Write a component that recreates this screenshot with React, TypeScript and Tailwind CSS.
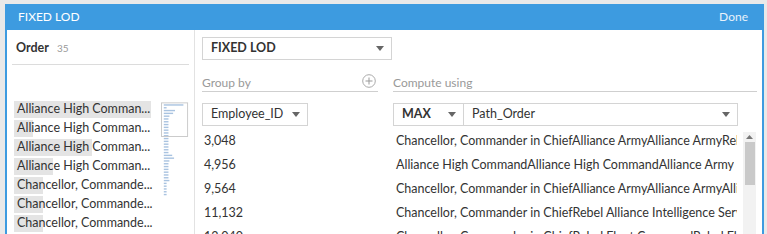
import React from "react";

const font = { fontFamily: "Lato, 'Open Sans', sans-serif" };

const listRows = [
  { label: "Alliance High Comman...", bar: 137 },
  { label: "Alliance High Comman...", bar: 19 },
  { label: "Alliance High Comman...", bar: 78 },
  { label: "Alliance High Comman...", bar: 39 },
  { label: "Chancellor, Commande...", bar: 29 },
  { label: "Chancellor, Commande...", bar: 29 },
  { label: "Chancellor, Commande...", bar: 29 },
];

const tableRows = [
  { id: "3,048", path: "Chancellor, Commander in ChiefAlliance ArmyAlliance ArmyRebel Alliance" },
  { id: "4,956", path: "Alliance High CommandAlliance High CommandAlliance Army" },
  { id: "9,564", path: "Chancellor, Commander in ChiefAlliance ArmyAlliance ArmyAlliance Army" },
  { id: "11,132", path: "Chancellor, Commander in ChiefRebel Alliance Intelligence Service" },
  { id: "12,040", path: "Chancellor, Commander in ChiefRebel Fleet CommandRebel Fleet" },
];

const overviewLines = [21, 3, 12, 10, 6, 5, 5, 5, 5, 5, 5, 5, 5, 5, 5, 5, 5, 5, 9, 11, 6, 5, 5, 5, 5, 5, 5, 6, 3, 3, 3, 3, 3];

const Caret = () => (
  <svg width="8" height="5" viewBox="0 0 8 5">
    <path d="M0 0 L8 0 L4 5 Z" fill="#666" />
  </svg>
);

const Dropdown = ({
  label,
  width,
  bold,
  className = "",
}: {
  label: string;
  width: string;
  bold?: boolean;
  className?: string;
}) => (
  <div
    className={`h-[23px] border border-[#d4d4d4] bg-white flex items-center justify-between pl-[8px] pr-[7px] text-[12.5px] text-[#333] ${bold ? "font-bold" : ""} ${width} ${className}`}
  >
    <span>{label}</span>
    <Caret />
  </div>
);

export default function App() {
  return (
    <div className="w-[767px] h-[234px] bg-[#e9e9e9] pt-[4px] pl-[5px] overflow-hidden" style={font}>
      <div className="w-[759px] h-[230px] bg-white flex flex-col">
        <div className="h-[26px] bg-[#3d9be0] flex items-center justify-between pl-[13px] pr-[16px] text-[12px] text-white shrink-0">
          <span>FIXED LOD</span>
          <span className="text-[#e8f2fb]">Done</span>
        </div>
        <div className="flex flex-1 border-x-2 border-[#3d9be0] min-h-0">
          {/* left field panel */}
          <div className="w-[188px] border-r border-[#e2e2e2] px-[5px] shrink-0">
            <div className="h-[35px] border-b border-[#dcdcdc] flex items-center pl-[4px] pt-[2px] gap-[8px]">
              <span className="text-[12.5px] font-bold text-[#333]">Order</span>
              <span className="text-[10px] text-[#999]">35</span>
            </div>
            <div className="flex mt-[35px] gap-[10px] pl-[2px]">
              <div className="w-[137px] flex flex-col">
                {listRows.map((r, i) => (
                  <div key={i} className="h-[19px] relative flex items-center">
                    <div className="absolute left-0 top-[1px] h-[17px] bg-[#e4e4e4]" style={{ width: r.bar }} />
                    <span className="relative pl-[3px] text-[12.5px] text-[#333] whitespace-nowrap">{r.label}</span>
                  </div>
                ))}
              </div>
              <svg width="30" height="102" viewBox="0 0 30 102" className="-mt-[1px]">
                {overviewLines.map((w, i) => (
                  <rect key={i} x="3" y={2 + i * 3} width={w} height="1.5" fill="#a9c3e0" />
                ))}
                <rect x="0.5" y="0.5" width="28" height="36" fill="none" stroke="#c8c8c8" />
              </svg>
            </div>
          </div>

          {/* right calc panel */}
          <div className="flex-1 pl-[7px] pr-[5px] pt-[7px] flex flex-col min-w-0">
            <Dropdown label="FIXED LOD" width="w-[190px]" bold />
            <div className="flex mt-[16px] gap-[15px]">
              <div className="w-[176px] h-[16px] border-b border-[#cfcfcf] flex items-center justify-between pb-[1px]">
                <span className="text-[12px] text-[#999]">Group by</span>
                <svg width="14" height="14" viewBox="0 0 14 14" className="mr-[2px] -mt-[4px]">
                  <circle cx="7" cy="7" r="6.3" fill="none" stroke="#aaa" strokeWidth="1" />
                  <path d="M7 3.5 V10.5 M3.5 7 H10.5" stroke="#999" strokeWidth="1" />
                </svg>
              </div>
              <div className="flex-1 h-[16px] border-b border-[#cfcfcf] flex items-center pb-[1px]">
                <span className="text-[12px] text-[#999]">Compute using</span>
              </div>
            </div>
            <div className="flex mt-[11px] gap-[85px]">
              <Dropdown label="Employee_ID" width="w-[106px]" />
              <div className="flex">
                <Dropdown label="MAX" width="w-[71px]" bold />
                <Dropdown label="Path_Order" width="w-[274px]" className="border-l-0" />
              </div>
            </div>
            <div className="flex flex-1 min-h-0 mt-[3px]">
              <div className="w-[535px] flex flex-col overflow-hidden">
                {tableRows.map((r, i) => (
                  <div key={i} className="h-[24px] shrink-0 flex items-center text-[12.5px] text-[#333]">
                    <span className="w-[191px] pl-[2px] shrink-0">{r.id}</span>
                    <span className="pl-[3px] whitespace-nowrap overflow-hidden">{r.path}</span>
                  </div>
                ))}
              </div>
              <div className="w-[13px] ml-[6px] mt-[3px] bg-[#f2f2f2] flex flex-col items-center">
                <svg width="7" height="4" viewBox="0 0 7 4" className="mt-[3px]">
                  <path d="M0 4 L7 4 L3.5 0 Z" fill="#777" />
                </svg>
                <div className="w-[10px] h-[43px] mt-[3px] bg-[#c9c9c9]" />
              </div>
            </div>
          </div>
        </div>
      </div>
    </div>
  );
}
